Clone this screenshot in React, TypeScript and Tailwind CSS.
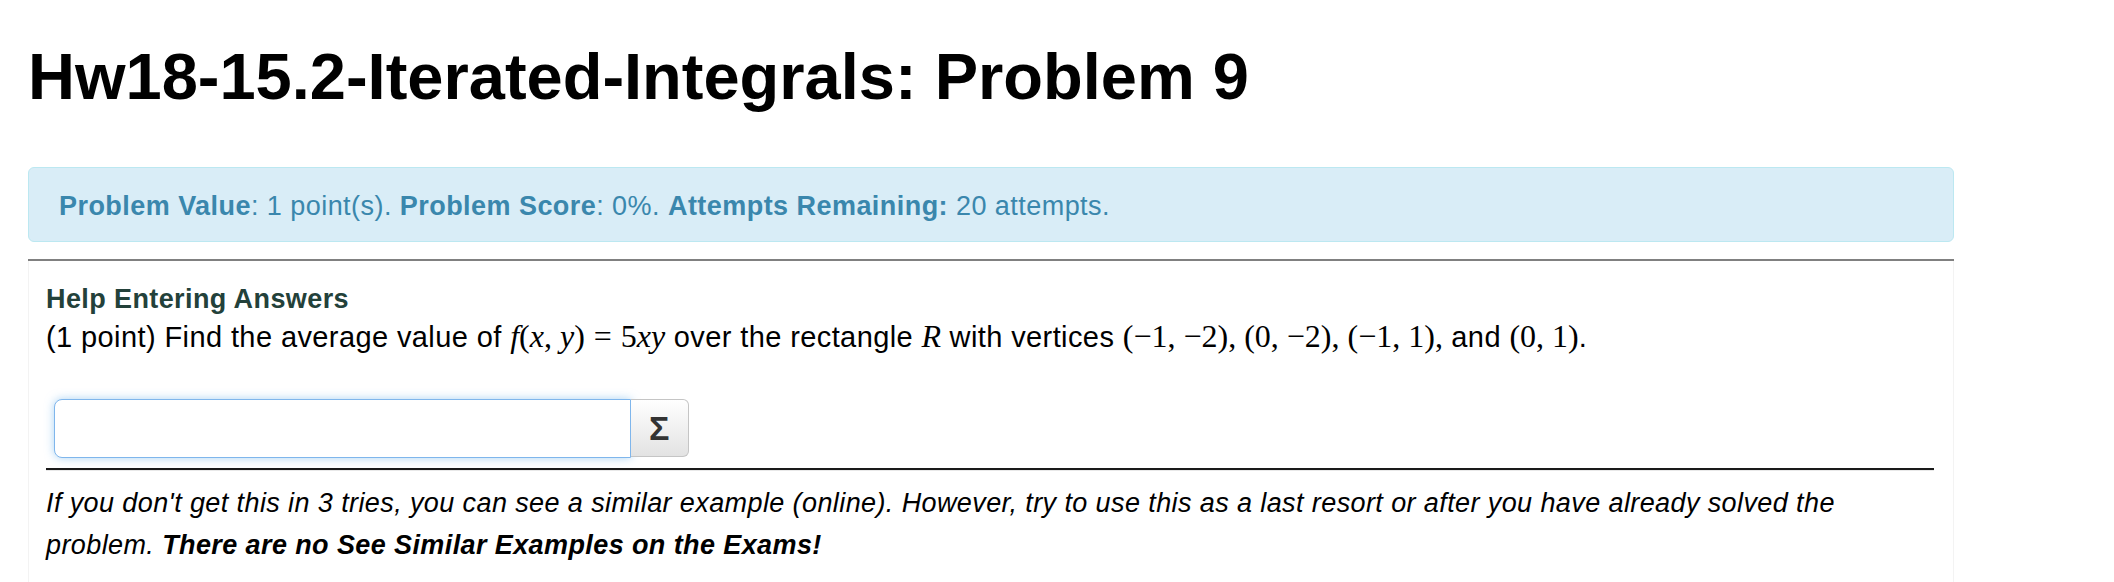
import React from 'react';

const serif = "font-['Liberation_Serif','Times_New_Roman',serif] text-[32px] leading-none tracking-normal";

function M({ children, wide }: { children: React.ReactNode; wide?: boolean }) {
  return <span className={wide ? `${serif} tracking-[1px]` : serif}>{children}</span>;
}

function I({ children }: { children: React.ReactNode }) {
  return <i className="italic">{children}</i>;
}

export default function App() {
  return (
    <div className="min-h-screen bg-white px-[28px] pt-[41px] font-['Liberation_Sans',Arial,sans-serif] text-black">
      <h1 className="text-[65px] font-bold leading-[1.1]">
        Hw18-15.2-Iterated-Integrals: Problem 9
      </h1>

      <div className="mt-[54px] w-[1926px]">
        <div className="rounded-[6px] border border-[#bce8f1] bg-[#d9edf7] pl-[30px] pt-[21px] pb-[18px] text-[27px] leading-[34px] tracking-[0.45px] text-[#3a87ad]">
          <b>Problem Value</b>: 1 point(s). <b>Problem Score</b>: 0%. <b>Attempts Remaining:</b> 20 attempts.
        </div>

        <div className="mt-[17px] h-[2px] bg-[#808080]" />

        <div className="min-h-[330px] border-x border-[#f3f3f3] pl-[17px] pr-[19px] pt-[21px] text-[27px] leading-[34px] tracking-[0.4px]">
          <div className="font-bold text-[#23413a]">Help Entering Answers</div>
          <div className="mt-[4px] text-[29px]">
            (1 point) Find the average value of{' '}
            <M>
              <I>f</I>(<I>x</I>, <I>y</I>)<span className="mx-[9px]">=</span>5<I>xy</I>
            </M>{' '}
            over the rectangle{' '}
            <M>
              <I>R</I>
            </M>{' '}
            with vertices <M wide>(−1, −2), (0, −2), (−1, 1),</M> and <M wide>(0, 1)</M>.
          </div>

          <div className="mt-[45px] ml-[8px] flex">
            <input
              type="text"
              className="h-[59px] w-[577px] rounded-l-[8px] border-[1.5px] border-[#7fb6ec] bg-white shadow-[0_0_10px_rgba(102,175,233,0.55)] outline-none"
            />
            <button className="flex h-[58px] w-[58px] items-center justify-center rounded-r-[6px] border border-l-0 border-[#c5c5c5] bg-gradient-to-b from-white to-[#e3e3e3] text-[34px] font-bold text-[#333]">
              Σ
            </button>
          </div>

          <div className="mt-[10px] h-[3px] border-t-2 border-b border-t-[#1a1a1a] border-b-[#e8e8e8]" />

          <p className="mt-[11px] leading-[42px] italic">
            If you don't get this in 3 tries, you can see a similar example (online). However, try to use this as a last resort or after you have already solved the
            <br />
            problem. <b>There are no See Similar Examples on the Exams!</b>
          </p>
        </div>
      </div>
    </div>
  );
}
